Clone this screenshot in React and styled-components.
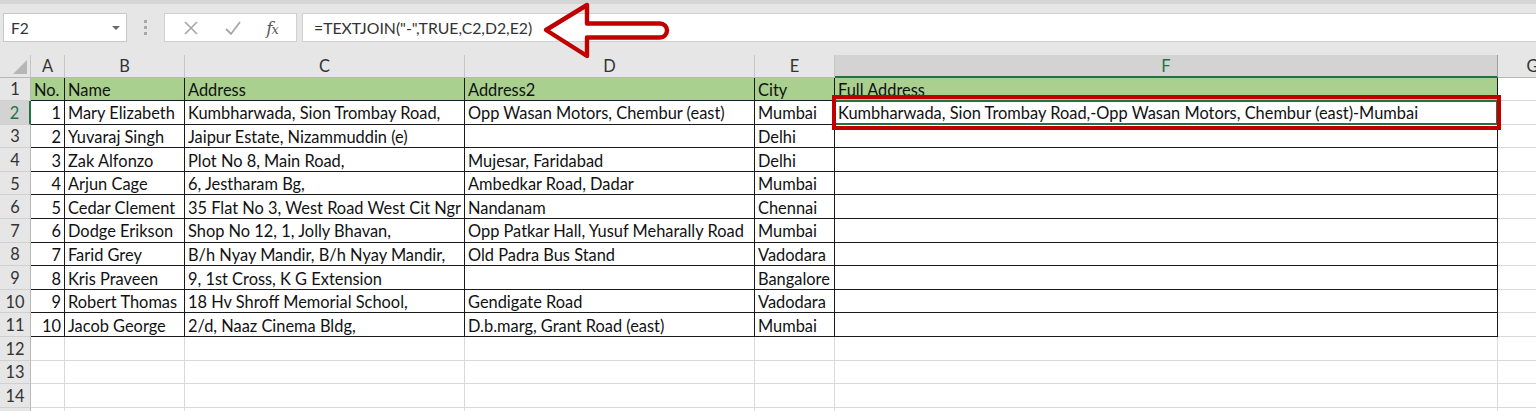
import React from "react";
import styled, { createGlobalStyle } from "styled-components";

const Global = createGlobalStyle`
  html, body { margin: 0; padding: 0; background: #ffffff; overflow: hidden; }
  body { font-family: Lato, "Liberation Sans", sans-serif; }
`;

const GREEN = "#217346";
const HEAD_GREEN = "#a9d08e";
const GRID = "#d9d9d9";
const TEMPLATE = "31px 34px 120px 280px 290px 80px 663px 70px";

const Screen = styled.div`
  width: 1536px;
  height: 411px;
  overflow: hidden;
  display: flex;
  flex-direction: column;
`;

const Toolbar = styled.div`
  position: relative;
  height: 55px;
  flex: none;
  box-sizing: border-box;
  background: #e6e6e6;
  border-top: 4px solid #d5d5d5;
  display: flex;
  align-items: flex-start;
  padding: 9px 0 0 3px;
`;

const NameBox = styled.div`
  width: 124px;
  height: 29px;
  box-sizing: border-box;
  background: #fff;
  border: 1px solid #c8c8c8;
  display: flex;
  align-items: center;
  justify-content: space-between;
  padding: 0 6px 0 7px;
  font-size: 15.5px;
  color: #333;
`;

const Caret = styled.span`
  width: 0;
  height: 0;
  border-left: 4px solid transparent;
  border-right: 4px solid transparent;
  border-top: 4px solid #6a6a6a;
`;

const Grip = styled.div`
  width: 37px;
  height: 29px;
  display: flex;
  flex-direction: column;
  align-items: center;
  justify-content: center;
  gap: 3px;
`;

const Dot = styled.span`
  width: 3px;
  height: 3px;
  background: #a8a8a8;
`;

const FnButtons = styled.div`
  width: 133px;
  height: 29px;
  box-sizing: border-box;
  background: #fff;
  border: 1px solid #d0d0d0;
  display: flex;
  align-items: center;
  justify-content: space-around;
  padding: 0 6px;
`;

const FxLabel = styled.span`
  font-family: "DejaVu Serif", "Liberation Serif", serif;
  font-style: italic;
  font-size: 17px;
  color: #5a5a5a;
  letter-spacing: -1px;
  & small { font-size: 13px; }
`;

const FormulaInput = styled.div`
  flex: 1;
  margin-left: 5px;
  margin-right: -4px;
  height: 29px;
  box-sizing: border-box;
  background: #fff;
  border: 1px solid #d0d0d0;
  display: flex;
  align-items: center;
  padding-left: 11px;
  font-size: 15.8px;
  color: #333;
`;

const Arrow = styled.svg`
  position: absolute;
  left: 538px;
  top: -4px;
  width: 140px;
  height: 58px;
  overflow: visible;
`;

const Sheet = styled.div`
  flex: 1;
  display: flex;
  flex-direction: column;
`;

const Row = styled.div`
  display: grid;
  grid-template-columns: ${TEMPLATE};
  height: ${(p) => p.$h}px;
  flex: none;
`;

const Corner = styled.div`
  position: relative;
  background: #e6e6e6;
  border-right: 1px solid #c6c6c6;
  border-bottom: 1px solid #b8b8b8;
  box-sizing: border-box;
  &::after {
    content: "";
    position: absolute;
    right: 3px;
    bottom: 3px;
    width: 0;
    height: 0;
    border-left: 14px solid transparent;
    border-bottom: 14px solid #b6b6b6;
  }
`;

const ColHead = styled.div`
  box-sizing: border-box;
  background: ${(p) => (p.$sel ? "#d3d3d3" : "#e6e6e6")};
  color: ${(p) => (p.$sel ? GREEN : "#333")};
  border-right: 1px solid ${(p) => (p.$sel ? "#a0a0a0" : "#c6c6c6")};
  border-bottom: ${(p) => (p.$sel ? `2px solid ${GREEN}` : "1px solid #b8b8b8")};
  display: flex;
  align-items: center;
  justify-content: center;
  font-size: 16.4px;
  overflow: hidden;
  white-space: nowrap;
`;

const RowHead = styled.div`
  box-sizing: border-box;
  background: ${(p) => (p.$sel ? "#d3d3d3" : "#e6e6e6")};
  color: ${(p) => (p.$sel ? GREEN : "#333")};
  border-right: ${(p) => (p.$sel ? `2px solid ${GREEN}` : "1px solid #b8b8b8")};
  border-bottom: 1px solid #d0d0d0;
  display: flex;
  align-items: center;
  justify-content: center;
  font-size: 16.4px;
`;

const Cell = styled.div`
  position: relative;
  box-sizing: border-box;
  background: ${(p) => (p.$head ? HEAD_GREEN : "#fff")};
  border-right: 1px solid ${(p) => (p.$table ? "#1a1a1a" : GRID)};
  border-bottom: 1px solid ${(p) => (p.$table ? "#1a1a1a" : GRID)};
  display: flex;
  align-items: center;
  justify-content: ${(p) => (p.$num ? "flex-end" : "flex-start")};
  padding: 1px 3px 0 3px;
  font-size: 16.4px;
  color: #111;
  white-space: nowrap;
  overflow: ${(p) => (p.$active ? "visible" : "hidden")};
  z-index: ${(p) => (p.$active ? 2 : 0)};
`;

const Selection = styled.div`
  position: absolute;
  inset: -1px -1px -1px -1px;
  border: 2px solid ${GREEN};
  pointer-events: none;
`;

const Callout = styled.div`
  position: absolute;
  left: -3px;
  right: -4px;
  top: -6px;
  bottom: -6px;
  border: 4px solid #c00000;
  pointer-events: none;
`;

const CellText = styled.span`
  position: relative;
`;

const headers = ["No.", "Name", "Address", "Address2", "City", "Full Address"];
const data = [
  [1, "Mary Elizabeth", "Kumbharwada, Sion Trombay Road,", "Opp Wasan Motors, Chembur (east)", "Mumbai", "Kumbharwada, Sion Trombay Road,-Opp Wasan Motors, Chembur (east)-Mumbai"],
  [2, "Yuvaraj Singh", "Jaipur Estate, Nizammuddin (e)", "", "Delhi", ""],
  [3, "Zak Alfonzo", "Plot No 8, Main Road,", "Mujesar, Faridabad", "Delhi", ""],
  [4, "Arjun Cage", "6, Jestharam Bg,", "Ambedkar Road, Dadar", "Mumbai", ""],
  [5, "Cedar Clement", "35 Flat No 3, West Road West Cit Ngr", "Nandanam", "Chennai", ""],
  [6, "Dodge Erikson", "Shop No 12, 1, Jolly Bhavan,", "Opp Patkar Hall, Yusuf Meharally Road", "Mumbai", ""],
  [7, "Farid Grey", "B/h Nyay Mandir, B/h Nyay Mandir,", "Old Padra Bus Stand", "Vadodara", ""],
  [8, "Kris Praveen", "9, 1st Cross, K G Extension", "", "Bangalore", ""],
  [9, "Robert Thomas", "18 Hv Shroff Memorial School,", "Gendigate Road", "Vadodara", ""],
  [10, "Jacob George", "2/d, Naaz Cinema Bldg,", "D.b.marg, Grant Road (east)", "Mumbai", ""],
];
const letters = ["A", "B", "C", "D", "E", "F", "G"];
const ROW_H = 23.6;

export default function App() {
  return (
    <Screen>
      <Global />
      <Toolbar>
        <NameBox>
          F2
          <Caret />
        </NameBox>
        <Grip>
          <Dot />
          <Dot />
          <Dot />
        </Grip>
        <FnButtons>
          <svg width="16" height="16" viewBox="0 0 16 16">
            <path d="M2 2 L14 14 M14 2 L2 14" stroke="#a6a6a6" strokeWidth="1.6" fill="none" />
          </svg>
          <svg width="18" height="16" viewBox="0 0 18 16">
            <path d="M2 9 L7 14 L16 2" stroke="#a6a6a6" strokeWidth="1.8" fill="none" />
          </svg>
          <FxLabel>
            f<small>x</small>
          </FxLabel>
        </FnButtons>
        <FormulaInput>=TEXTJOIN("-",TRUE,C2,D2,E2)</FormulaInput>
        <Arrow viewBox="0 0 140 58">
          <path
            d="M8 30 L49 5 L49 23.5 L122 23.5 A7 7 0 0 1 122 37.5 L49 37.5 L49 56 Z"
            fill="none"
            stroke="#c00000"
            strokeWidth="4.4"
            strokeLinejoin="round"
          />
        </Arrow>
      </Toolbar>
      <Sheet>
        <Row $h={22.5}>
          <Corner />
          {letters.map((l) => (
            <ColHead key={l} $sel={l === "F"}>
              {l}
            </ColHead>
          ))}
        </Row>
        <Row $h={ROW_H}>
          <RowHead>1</RowHead>
          {headers.map((h) => (
            <Cell key={h} $head $table>
              <CellText>{h}</CellText>
            </Cell>
          ))}
          <Cell />
        </Row>
        {data.map((r, i) => (
          <Row key={i} $h={ROW_H}>
            <RowHead $sel={i === 0}>{i + 2}</RowHead>
            {r.map((v, j) => (
              <Cell key={j} $table $num={j === 0} $active={i === 0 && j === 5}>
                <CellText>{v}</CellText>
                {i === 0 && j === 5 && (
                  <>
                    <Selection />
                    <Callout />
                  </>
                )}
              </Cell>
            ))}
            <Cell />
          </Row>
        ))}
        {[12, 13, 14].map((n) => (
          <Row key={n} $h={ROW_H}>
            <RowHead>{n}</RowHead>
            {letters.map((l) => (
              <Cell key={l} />
            ))}
          </Row>
        ))}
        <Row $h={ROW_H}>
          <RowHead />
          {letters.map((l) => (
            <Cell key={l} />
          ))}
        </Row>
      </Sheet>
    </Screen>
  );
}
